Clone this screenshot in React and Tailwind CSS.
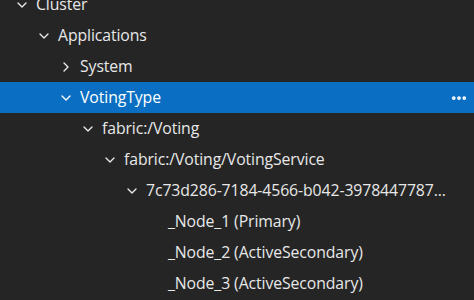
import { ChevronDown, ChevronRight, MoreHorizontal } from 'lucide-react';

const rows = [
  { label: 'Cluster', depth: 0, icon: 'open' },
  { label: 'Applications', depth: 1, icon: 'open' },
  { label: 'System', depth: 2, icon: 'closed' },
  { label: 'VotingType', depth: 2, icon: 'open', selected: true },
  { label: 'fabric:/Voting', depth: 3, icon: 'open' },
  { label: 'fabric:/Voting/VotingService', depth: 4, icon: 'open' },
  { label: '7c73d286-7184-4566-b042-3978447787...', depth: 5, icon: 'open' },
  { label: '_Node_1 (Primary)', depth: 6, icon: 'none' },
  { label: '_Node_2 (ActiveSecondary)', depth: 6, icon: 'none' },
  { label: '_Node_3 (ActiveSecondary)', depth: 6, icon: 'none' },
];

const pads = ['pl-[14px]', 'pl-[36px]', 'pl-[58px]', 'pl-[80px]', 'pl-[102px]', 'pl-[124px]', 'pl-[146px]'];

export default function App() {
  return (
    <div
      className="w-[474px] h-[300px] overflow-hidden bg-[#252526] text-[#e8e8e8]"
      style={{ fontFamily: '"Open Sans", "Noto Sans", sans-serif' }}
    >
      <div className="-mt-[11px]">
        {rows.map((row) => (
          <div
            key={row.label}
            className={`flex items-center h-[31px] pr-[6px] ${pads[row.depth]} ${
              row.selected ? 'bg-[#0a6fc2] text-white' : ''
            }`}
          >
            <span className="w-[22px] flex items-center shrink-0">
              {row.icon === 'open' && <ChevronDown size={16} strokeWidth={2} />}
              {row.icon === 'closed' && <ChevronRight size={16} strokeWidth={2} />}
            </span>
            <span className="text-[15.8px] font-medium whitespace-nowrap flex-1 tracking-[-0.1px]">{row.label}</span>
            {row.selected && <MoreHorizontal size={18} strokeWidth={3} />}
          </div>
        ))}
      </div>
    </div>
  );
}
